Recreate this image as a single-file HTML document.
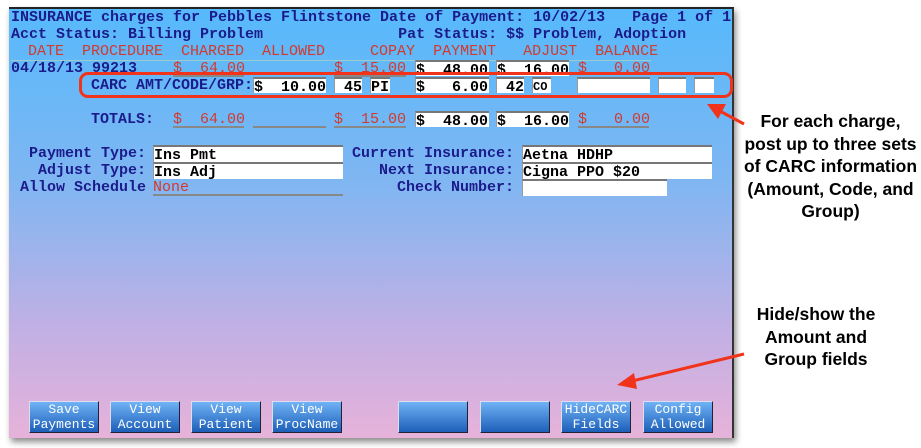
<!DOCTYPE html>
<html><head><meta charset="utf-8"><style>
body{margin:0;width:921px;height:448px;background:#fff;position:relative;overflow:hidden;font-family:"Liberation Mono",monospace;}
#p{position:absolute;left:9px;top:7px;width:723px;height:429px;background:linear-gradient(#56b9fb 0%,#7fb6f2 40%,#c2b0e4 75%,#e6b2da 100%);border-top:2px solid #222;border-right:2px solid #333;box-shadow:2px 4px 6px rgba(0,0,0,.45);}
.t{position:absolute;font-size:15px;line-height:17px;white-space:pre;color:#1b1b8c;font-weight:bold;}
.r{color:#d23a2e;font-weight:normal;}
.b{position:absolute;background:#fff;border-top:2px solid #777;border-left:1px solid #999;height:16px;font-size:15px;line-height:17px;white-space:pre;color:#000;font-weight:bold;box-sizing:border-box;}
.u{position:absolute;border-bottom:2px solid #888;height:17px;font-size:15px;line-height:17px;white-space:pre;color:#d23a2e;box-sizing:border-box;}
.btn{position:absolute;top:401px;width:70px;height:32px;background:linear-gradient(#6fb2f5,#1d5fb8);border:1px solid #dde;border-right-color:#223;border-bottom-color:#223;box-sizing:border-box;color:#fff;font-family:"Liberation Mono",monospace;font-size:13px;line-height:15px;text-align:center;}
.a{position:absolute;font-family:"Liberation Sans",sans-serif;font-weight:bold;font-size:17.5px;line-height:22.5px;text-align:center;color:#000;white-space:nowrap;}
</style></head><body>
<div id="p"></div>
<div class="t" style="left:11px;top:9px">INSURANCE charges for Pebbles Flintstone Date of Payment: 10/02/13   Page 1 of 1</div>
<div class="t" style="left:11px;top:26px">Acct Status: Billing Problem               Pat Status: $$ Problem, Adoption</div>
<div class="t r" style="left:28px;top:43px">DATE  PROCEDURE  CHARGED  ALLOWED     COPAY  PAYMENT   ADJUST  BALANCE</div>
<div style="position:absolute;left:11px;top:60px;width:640px;border-top:1px solid #9cc"></div>
<div class="t" style="left:11px;top:60px">04/18/13 99213</div>
<div class="u" style="left:173px;top:60px;width:71px">$  64.00</div>
<div class="u" style="left:334px;top:60px;width:72px">$  15.00</div>
<div class="b" style="left:415px;top:60px;width:74px">$  48.00</div>
<div class="b" style="left:496px;top:60px;width:73px">$  16.00</div>
<div class="u" style="left:578px;top:60px;width:71px;border:none">$   0.00</div>
<div class="t" style="left:91px;top:77px">CARC AMT/CODE/GRP:</div>
<div class="b" style="left:253px;top:77px;width:73px">$  10.00</div>
<div class="b" style="left:334px;top:77px;width:28px"> 45</div>
<div class="b" style="left:370px;top:77px;width:20px">PI</div>
<div class="b" style="left:415px;top:77px;width:74px">$   6.00</div>
<div class="b" style="left:496px;top:77px;width:28px"> 42</div>
<div class="b" style="left:532px;top:77px;width:19px;font-size:12px">CO</div>
<div class="b" style="left:577px;top:77px;width:73px"></div>
<div class="b" style="left:658px;top:77px;width:28px"></div>
<div class="b" style="left:694px;top:77px;width:20px"></div>
<div style="position:absolute;left:79px;top:72px;width:648px;height:20px;border:3px solid #f2331c;border-radius:9px"></div>
<div class="t" style="left:91px;top:111px">TOTALS:</div>
<div class="u" style="left:173px;top:111px;width:71px">$  64.00</div>
<div class="u" style="left:253px;top:111px;width:73px"></div>
<div class="u" style="left:334px;top:111px;width:72px">$  15.00</div>
<div class="b" style="left:415px;top:111px;width:74px">$  48.00</div>
<div class="b" style="left:496px;top:111px;width:73px">$  16.00</div>
<div class="u" style="left:578px;top:111px;width:71px">$   0.00</div>
<div class="t" style="left:29px;top:145px">Payment Type:</div>
<div class="t" style="left:38px;top:162px">Adjust Type:</div>
<div class="t" style="left:20px;top:179px">Allow Schedule</div>
<div class="b" style="left:153px;top:145px;width:190px;height:17px">Ins Pmt</div>
<div class="b" style="left:153px;top:162px;width:190px;height:17px">Ins Adj</div>
<div class="u" style="left:153px;top:179px;width:190px">None</div>
<div class="t" style="left:352px;top:145px">Current Insurance:</div>
<div class="t" style="left:379px;top:162px">Next Insurance:</div>
<div class="t" style="left:397px;top:179px">Check Number:</div>
<div class="b" style="left:522px;top:145px;width:190px;height:17px">Aetna HDHP</div>
<div class="b" style="left:522px;top:162px;width:190px;height:17px">Cigna PPO $20</div>
<div class="b" style="left:522px;top:179px;width:145px;height:17px"></div>
<div class="btn" style="left:29px">Save<br>Payments</div>
<div class="btn" style="left:110px">View<br>Account</div>
<div class="btn" style="left:191px">View<br>Patient</div>
<div class="btn" style="left:272px">View<br>ProcName</div>
<div class="btn" style="left:398px"></div>
<div class="btn" style="left:480px"></div>
<div class="btn" style="left:561px">HideCARC<br>Fields</div>
<div class="btn" style="left:643px">Config<br>Allowed</div>
<div class="a" style="left:740px;top:110px;width:181px">For each charge,<br>post up to three sets<br>of CARC information<br>(Amount, Code, and<br>Group)</div>
<div class="a" style="left:741px;top:303px;width:150px">Hide/show the<br>Amount and<br>Group fields</div>
<svg style="position:absolute;left:0;top:0" width="921" height="448">
<line x1="744" y1="124" x2="718" y2="110" stroke="#f2331c" stroke-width="3"/>
<polygon points="707,104 726,104 718,119" fill="#f2331c"/>
<line x1="744" y1="354" x2="632" y2="381" stroke="#f2331c" stroke-width="3"/>
<polygon points="617,385 634,373 637,389" fill="#f2331c"/>
</svg>
</body></html>
